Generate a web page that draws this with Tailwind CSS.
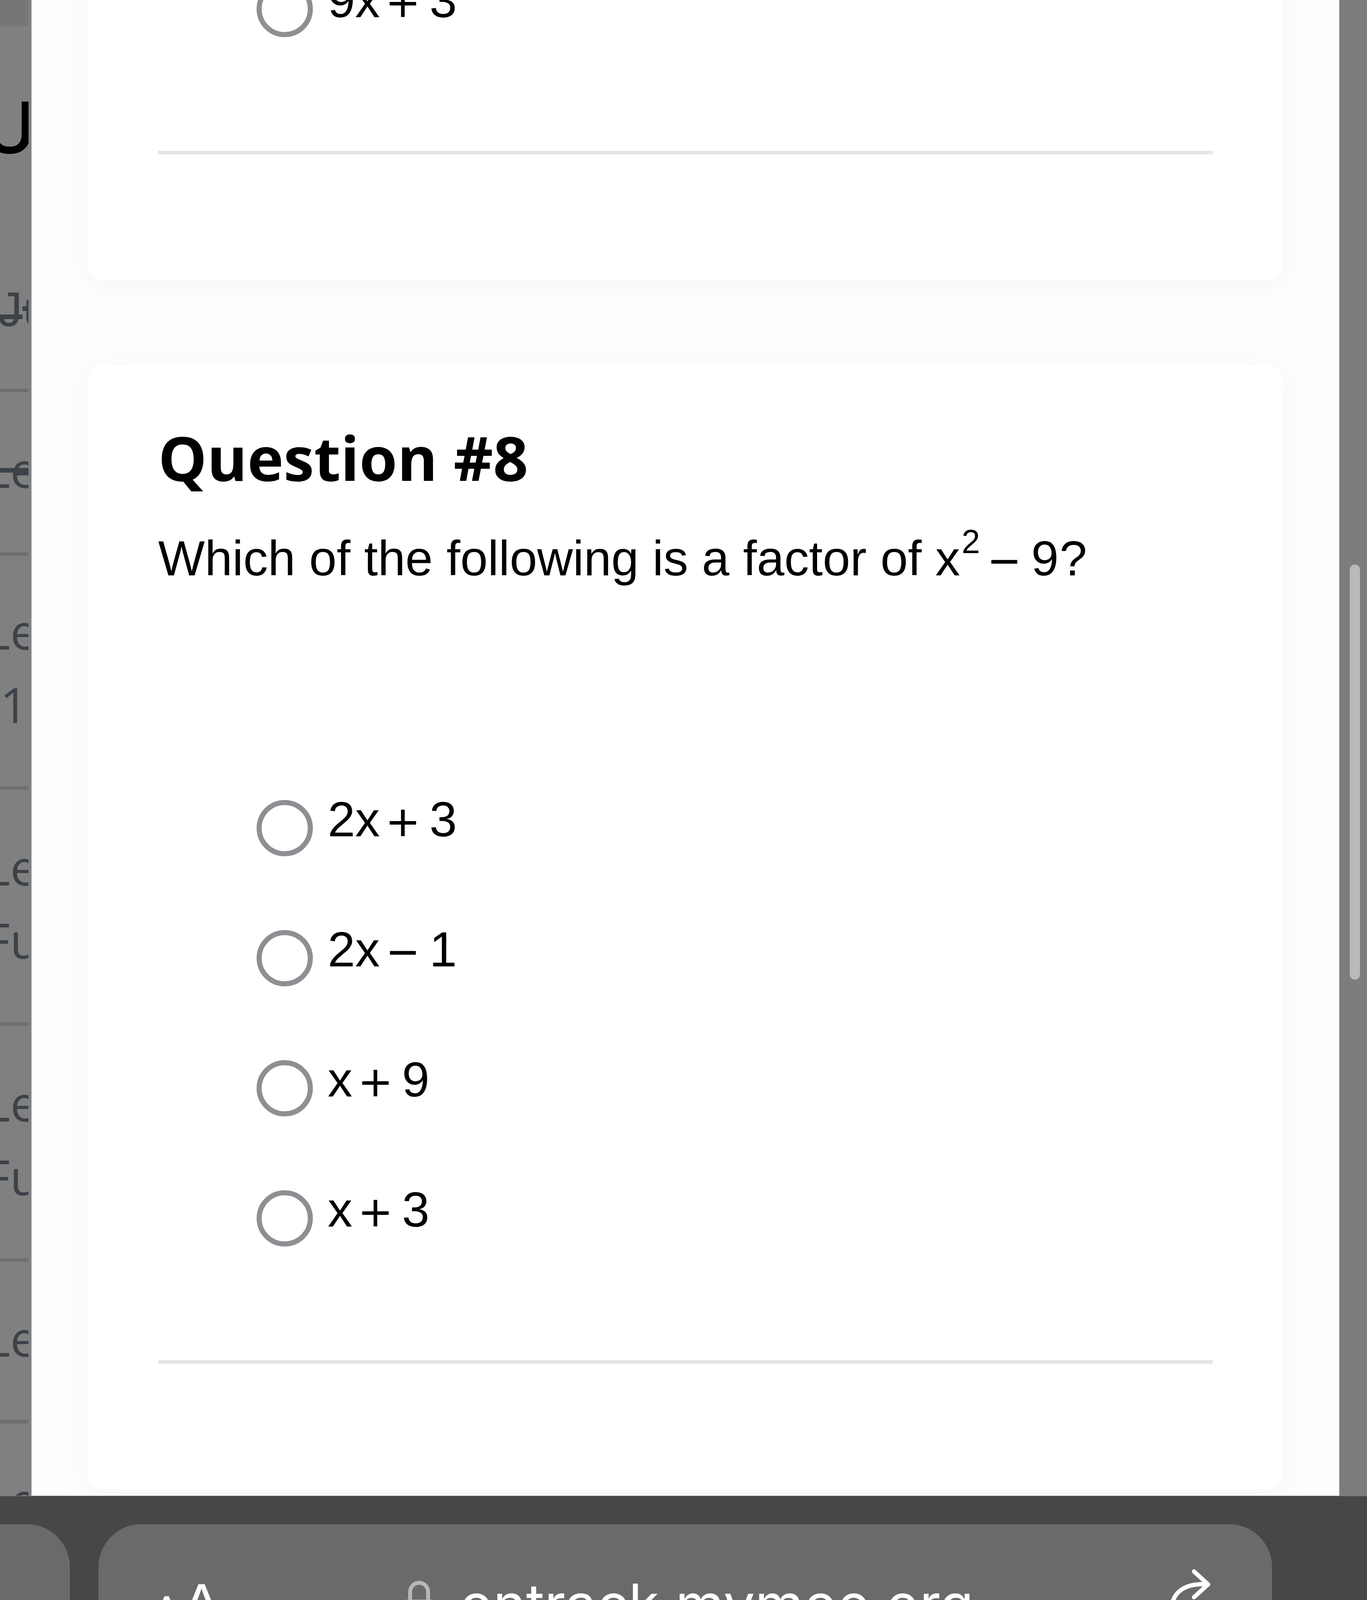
<!DOCTYPE html>
<html lang="en">
<head>
    <meta charset="UTF-8">
    <meta name="viewport" content="width=device-width, initial-scale=1.0">
    <title>Question #8</title>
    <script src="https://cdn.jsdelivr.net/npm/@tailwindcss/browser@4"></script>
</head>
<body class="w-[3500px] h-[4101px] overflow-hidden flex flex-col bg-[#474748] font-['Liberation_Sans',sans-serif] text-black">

    <div class="h-[3829px] flex shrink-0 overflow-hidden">

        <!-- Dimmed sidebar behind the drawer -->
        <div class="w-[81px] shrink-0 bg-[#808080] border-r border-[#a8a8a8]">
            <div class="w-[73px] h-[3829px] overflow-hidden font-['Open_Sans',sans-serif] text-[125px] leading-[125px] text-[#3c4248] whitespace-nowrap">
                <div class="h-[67px] bg-[#767677]"></div>
                <div class="mt-[161px] ml-[-44px] h-[185px] text-[185px] leading-[185px] font-semibold text-black">U</div>
                <div class="mt-[311px] ml-[-5px] h-[125px] line-through"><span class="font-['Liberation_Sans',sans-serif]">J</span>u</div>
                <div class="mt-[146px] h-[9px] bg-[#6f6f6f]"></div>
                <div class="mt-[134px] ml-[-39px] h-[125px] line-through">Le</div>
                <div class="mt-[151px] h-[9px] bg-[#6f6f6f]"></div>
                <div class="mt-[129px] ml-[-39px] h-[125px]">Le</div>
                <div class="mt-[63px] h-[125px]">1</div>
                <div class="mt-[148px] h-[9px] bg-[#6f6f6f]"></div>
                <div class="mt-[134px] ml-[-39px] h-[125px]">Le</div>
                <div class="mt-[62px] ml-[-39px] h-[125px]">Fu</div>
                <div class="mt-[149px] h-[9px] bg-[#6f6f6f]"></div>
                <div class="mt-[134px] ml-[-39px] h-[125px]">Le</div>
                <div class="mt-[64px] ml-[-39px] h-[125px]">Fu</div>
                <div class="mt-[147px] h-[9px] bg-[#6f6f6f]"></div>
                <div class="mt-[132px] ml-[-39px] h-[125px]">Le</div>
                <div class="mt-[148px] h-[9px] bg-[#6f6f6f]"></div>
                <div class="mt-[132px] ml-[-39px] h-[125px]">Le</div>
            </div>
        </div>

        <!-- Quiz -->
        <main class="w-[3348px] shrink-0 bg-[#fefefe] overflow-hidden">

            <!-- Question 7, scrolled off -->
            <section class="ml-[143px] w-[3062px] h-[792px] mt-[-75px] bg-white rounded-[40px] pl-[181px] pr-[181px] shadow-[0_10px_70px_rgba(120,120,170,0.07)]">
                <div class="flex items-start h-[150px] ml-[252px] text-[126.5px] leading-[150px]">
                    <div class="w-[144px] h-[144px] mt-[26px] mr-[38px] shrink-0 rounded-full border-[13px] border-[#8e8e93]"></div>
                    <div>9x<span class="font-['Inter',sans-serif] font-light text-[150px] leading-[0] align-[-8px] ml-[10px] mr-[19px]">+</span>3</div>
                </div>
                <div class="mt-[311px] h-[9px] bg-[#e5e5e5]"></div>
            </section>

            <!-- Question 8 -->
            <section class="ml-[143px] w-[3062px] h-[2878px] mt-[217px] bg-white rounded-[40px] pt-[136px] pl-[181px] pr-[181px] shadow-[0_10px_70px_rgba(120,120,170,0.07)]">
                <h2 class="font-['Open_Sans',sans-serif] font-bold text-[157px] leading-[200px]">Question #8</h2>
                <p class="mt-[74px] h-[170px] text-[126.5px] leading-[170px] whitespace-nowrap">Which of the following is a factor of x<span class="ml-[4px] text-[85px] leading-[0] align-[57px]">2</span><span class="font-['Inter',sans-serif] font-light text-[150px] leading-[0] align-[-8px] ml-[13px] mr-[20px]">−</span>9<span class="ml-[2px]">?</span></p>

                <div class="mt-[508px] ml-[252px] flex flex-col gap-[183px] text-[126.5px] leading-[150px]">
                    <div class="flex items-start h-[150px]">
                        <div class="w-[144px] h-[144px] mt-[26px] mr-[38px] shrink-0 rounded-full border-[13px] border-[#8e8e93]"></div>
                        <div>2x<span class="font-['Inter',sans-serif] font-light text-[150px] leading-[0] align-[-8px] ml-[10px] mr-[19px]">+</span>3</div>
                    </div>
                    <div class="flex items-start h-[150px]">
                        <div class="w-[144px] h-[144px] mt-[26px] mr-[38px] shrink-0 rounded-full border-[13px] border-[#8e8e93]"></div>
                        <div>2x<span class="font-['Inter',sans-serif] font-light text-[150px] leading-[0] align-[-8px] ml-[10px] mr-[19px]">−</span>1</div>
                    </div>
                    <div class="flex items-start h-[150px]">
                        <div class="w-[144px] h-[144px] mt-[26px] mr-[38px] shrink-0 rounded-full border-[13px] border-[#8e8e93]"></div>
                        <div>x<span class="font-['Inter',sans-serif] font-light text-[150px] leading-[0] align-[-8px] ml-[10px] mr-[19px]">+</span>9</div>
                    </div>
                    <div class="flex items-start h-[150px]">
                        <div class="w-[144px] h-[144px] mt-[26px] mr-[38px] shrink-0 rounded-full border-[13px] border-[#8e8e93]"></div>
                        <div>x<span class="font-['Inter',sans-serif] font-light text-[150px] leading-[0] align-[-8px] ml-[10px] mr-[19px]">+</span>3</div>
                    </div>
                </div>

                <div class="mt-[311px] h-[9px] bg-[#e5e5e5]"></div>
            </section>
        </main>

        <!-- Dimmed page with scrollbar -->
        <div class="flex-1 bg-[#7c7c7e] pt-[1445px] pl-[27px]">
            <div class="w-[26px] h-[1063px] rounded-full bg-[#b9b9bb]"></div>
        </div>
    </div>

    <!-- Safari toolbar -->
    <div class="flex-1 flex items-start gap-[73px] pt-[72px] border-t border-[#8c8c8c] overflow-hidden">
        <div class="w-[179px] h-[200px] shrink-0 bg-[#6a6a6b] rounded-tr-[110px]"></div>
        <div class="w-[3005px] h-[200px] shrink-0 flex items-start overflow-hidden bg-[#6a6a6b] rounded-t-[110px] text-white">
            <div class="mt-[130px] ml-[139px] flex items-baseline leading-[150px] gap-[4px]">
                <span class="text-[106px]">A</span>
                <span class="text-[150px]">A</span>
            </div>
            <svg class="mt-[145px] ml-[469px] shrink-0" width="76" height="60" viewBox="0 0 76 60" fill="none">
                <path d="M15 52V28a23 23 0 0 1 46 0v24" stroke="#b6b6bc" stroke-width="10"/>
                <rect x="0" y="48" width="76" height="40" rx="8" fill="#b6b6bc"/>
            </svg>
            <div class="mt-[124px] ml-[66px] font-['Inter',sans-serif] text-[143px] leading-[160px] whitespace-nowrap">ontrack.mymoe.org</div>
            <svg class="mt-[113px] ml-auto mr-[157px] shrink-0" width="110" height="90" viewBox="0 0 110 90" fill="none" stroke="#ffffff" stroke-width="11" stroke-linecap="round" stroke-linejoin="round">
                <path d="M11 92C18 56 50 37 103 41"/>
                <path d="M67 8l36 33-36 33"/>
            </svg>
        </div>
    </div>
</body>
</html>
